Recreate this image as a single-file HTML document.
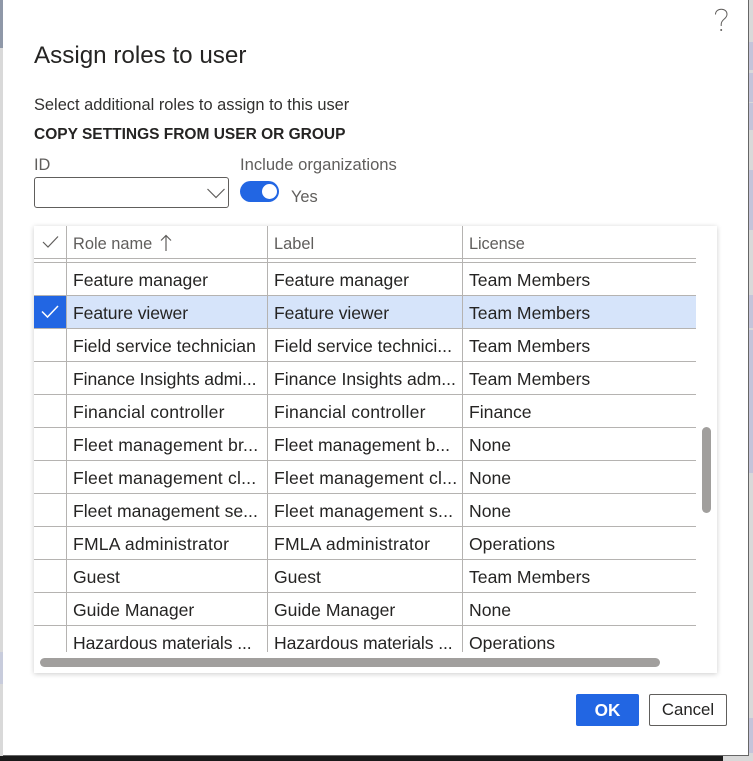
<!DOCTYPE html>
<html lang="en">
<head>
<meta charset="utf-8">
<title>Assign roles to user</title>
<style>
html,body{margin:0;padding:0;width:753px;height:761px;overflow:hidden;background:#d9d9d9}
body{position:relative;font-family:"Liberation Sans",sans-serif;color:#252423}
.a{position:absolute}
.t{position:absolute;white-space:nowrap}
.dialog{position:absolute;left:3px;top:0;width:745px;height:755px;background:#fff;border-right:1px solid #666;border-bottom:1px solid #666}
.grid{position:absolute;left:34px;top:226px;width:683px;height:447px;background:#fff;box-shadow:0 1px 5px rgba(0,0,0,.2)}
.h{background:#b5b3b1;height:1px;left:34px;width:662px}
.v{background:#b5b3b1;width:1px}
.c{font-size:17.6px;line-height:33px;height:33px}
.hd{font-size:16.4px;color:#605e5c;line-height:34px;top:227px}
.lb{font-size:16.4px;color:#605e5c}
.w{letter-spacing:.2px}
.n{letter-spacing:-.1px}
</style>
</head>
<body>
<div class="a" style="left:0;top:0;width:3px;height:48px;background:#8f98a8"></div>
<div class="a" style="left:0;top:652px;width:3px;height:32px;background:#c8ccdc"></div>
<div class="a" style="left:749px;top:42px;width:4px;height:28px;background:#c4c4da"></div>
<div class="a" style="left:749px;top:73px;width:4px;height:29px;background:#c4c4da"></div>
<div class="a" style="left:749px;top:103px;width:4px;height:27px;background:#c4c4da"></div>
<div class="a" style="left:749px;top:170px;width:4px;height:60px;background:#c4c4da"></div>
<div class="a" style="left:749px;top:295px;width:4px;height:33px;background:#c4c4da"></div>
<div class="a" style="left:749px;top:330px;width:4px;height:143px;background:#c4c4da"></div>
<div class="a" style="left:749px;top:718px;width:4px;height:35px;background:#c4c4da"></div>
<div class="a" style="left:0;top:756px;width:723px;height:5px;background:#1a1a1a"></div>

<div class="dialog"></div>

<svg class="a" style="left:714px;top:8px" width="15" height="25" viewBox="0 0 15 25"><path d="M1.500 6.500 C1.500 3.200 4 1.200 7.300 1.200 C10.800 1.200 13 3.400 13 6.300 C13 8.600 11.700 9.900 10 11.300 C8.300 12.700 7.200 14 7.200 16.500 V18" fill="none" stroke="#605e5c" stroke-width="1"/><circle cx="7.200" cy="22" r="1" fill="#605e5c"/></svg>
<div class="t" style="left:34px;top:40px;font-size:24.2px;line-height:32px">Assign roles to user</div>
<div class="t" style="left:34px;top:95px;font-size:16.4px;line-height:20px;color:#323130">Select additional roles to assign to this user</div>
<div class="t" style="left:34px;top:125px;font-size:15.5px;line-height:20px;font-weight:bold">COPY SETTINGS FROM USER OR GROUP</div>
<div class="t lb" style="left:34px;top:155px;line-height:20px">ID</div>
<div class="t lb" style="left:240px;top:155px;line-height:20px;font-size:16.6px">Include organizations</div>

<div class="a" style="left:34px;top:177px;width:193px;height:29px;border:1px solid #605e5c;border-radius:3px;background:#fff"></div>
<svg class="a" style="left:206px;top:187px" width="20" height="13" viewBox="0 0 20 13"><path d="M1.500 2 L10 10.500 L18.500 2" fill="none" stroke="#605e5c" stroke-width="1.200"/></svg>

<div class="a" style="left:240px;top:181px;width:39px;height:21px;border-radius:11px;background:#2266e3"></div>
<div class="a" style="left:262px;top:184px;width:15px;height:15px;border-radius:50%;background:#fff"></div>
<div class="t lb" style="left:291px;top:187px;line-height:20px">Yes</div>

<div class="grid"></div>

<!-- selected row -->
<div class="a" style="left:66px;top:296px;width:630px;height:32px;background:#d6e4fa"></div>
<div class="a" style="left:34px;top:296px;width:32px;height:32px;background:#2266e3"></div>

<!-- vertical lines -->
<div class="a v" style="left:66px;top:226px;height:426px"></div>
<div class="a v" style="left:267px;top:226px;height:426px"></div>
<div class="a v" style="left:462px;top:226px;height:426px"></div>

<!-- horizontal lines -->
<div class="a h" style="top:258px"></div>
<div class="a h" style="top:262px"></div>
<div class="a h" style="top:295px"></div>
<div class="a h" style="top:328px"></div>
<div class="a h" style="top:361px"></div>
<div class="a h" style="top:394px"></div>
<div class="a h" style="top:427px"></div>
<div class="a h" style="top:460px"></div>
<div class="a h" style="top:493px"></div>
<div class="a h" style="top:526px"></div>
<div class="a h" style="top:559px"></div>
<div class="a h" style="top:592px"></div>
<div class="a h" style="top:625px"></div>

<!-- header -->
<svg class="a" style="left:42px;top:235px" width="17" height="14" viewBox="0 0 17 14"><path d="M1 7 L6 12 L16 1.500" fill="none" stroke="#605e5c" stroke-width="1.200"/></svg>
<div class="t hd" style="left:73px">Role name</div>
<svg class="a" style="left:160px;top:234px" width="12" height="18" viewBox="0 0 12 18"><path d="M6 17 V1.500 M1 6.500 L6 1.500 L11 6.500" fill="none" stroke="#605e5c" stroke-width="1.200"/></svg>
<div class="t hd" style="left:274px">Label</div>
<div class="t hd n" style="left:469px">License</div>

<svg class="a" style="left:41px;top:304px" width="18" height="15" viewBox="0 0 18 15"><path d="M1 7.500 L6.500 13 L17 2" fill="none" stroke="#fff" stroke-width="1.500"/></svg>

<!-- rows -->
<div class="t c" style="left:73px;top:264px">Feature manager</div><div class="t c" style="left:274px;top:264px">Feature manager</div><div class="t c" style="left:469px;top:264px">Team Members</div>
<div class="t c n" style="left:73px;top:297px">Feature viewer</div><div class="t c n" style="left:274px;top:297px">Feature viewer</div><div class="t c" style="left:469px;top:297px">Team Members</div>
<div class="t c" style="left:73px;top:330px">Field service technician</div><div class="t c" style="left:274px;top:330px">Field service technici...</div><div class="t c" style="left:469px;top:330px">Team Members</div>
<div class="t c n" style="left:73px;top:363px">Finance Insights admi...</div><div class="t c" style="left:274px;top:363px">Finance Insights adm...</div><div class="t c" style="left:469px;top:363px">Team Members</div>
<div class="t c w" style="left:73px;top:396px">Financial controller</div><div class="t c w" style="left:274px;top:396px">Financial controller</div><div class="t c" style="left:469px;top:396px">Finance</div>
<div class="t c w" style="left:73px;top:429px">Fleet management br...</div><div class="t c" style="left:274px;top:429px">Fleet management b...</div><div class="t c" style="left:469px;top:429px">None</div>
<div class="t c w" style="left:73px;top:462px">Fleet management cl...</div><div class="t c w" style="left:274px;top:462px">Fleet management cl...</div><div class="t c" style="left:469px;top:462px">None</div>
<div class="t c" style="left:73px;top:495px">Fleet management se...</div><div class="t c w" style="left:274px;top:495px">Fleet management s...</div><div class="t c" style="left:469px;top:495px">None</div>
<div class="t c w" style="left:73px;top:528px">FMLA administrator</div><div class="t c w" style="left:274px;top:528px">FMLA administrator</div><div class="t c" style="left:469px;top:528px">Operations</div>
<div class="t c" style="left:73px;top:561px">Guest</div><div class="t c" style="left:274px;top:561px">Guest</div><div class="t c" style="left:469px;top:561px">Team Members</div>
<div class="t c" style="left:73px;top:594px">Guide Manager</div><div class="t c" style="left:274px;top:594px">Guide Manager</div><div class="t c" style="left:469px;top:594px">None</div>
<div class="t c n" style="left:73px;top:627px;height:25px;overflow:hidden">Hazardous materials ...</div><div class="t c n" style="left:274px;top:627px;height:25px;overflow:hidden">Hazardous materials ...</div><div class="t c" style="left:469px;top:627px;height:25px;overflow:hidden">Operations</div>

<!-- scrollbars -->
<div class="a" style="left:702px;top:427px;width:9px;height:86px;border-radius:5px;background:#a19f9d"></div>
<div class="a" style="left:40px;top:658px;width:620px;height:9px;border-radius:5px;background:#a19f9d"></div>

<!-- buttons -->
<div class="a" style="left:576px;top:694px;width:63px;height:32px;border-radius:2px;background:#2266e3;color:#fff;font-size:17.2px;font-weight:bold;line-height:32px;text-align:center">OK</div>
<div class="a" style="left:649px;top:694px;width:76px;height:30px;border:1px solid #605e5c;border-radius:2px;background:#fff;font-size:16.8px;line-height:30px;text-align:center">Cancel</div>
</body>
</html>
